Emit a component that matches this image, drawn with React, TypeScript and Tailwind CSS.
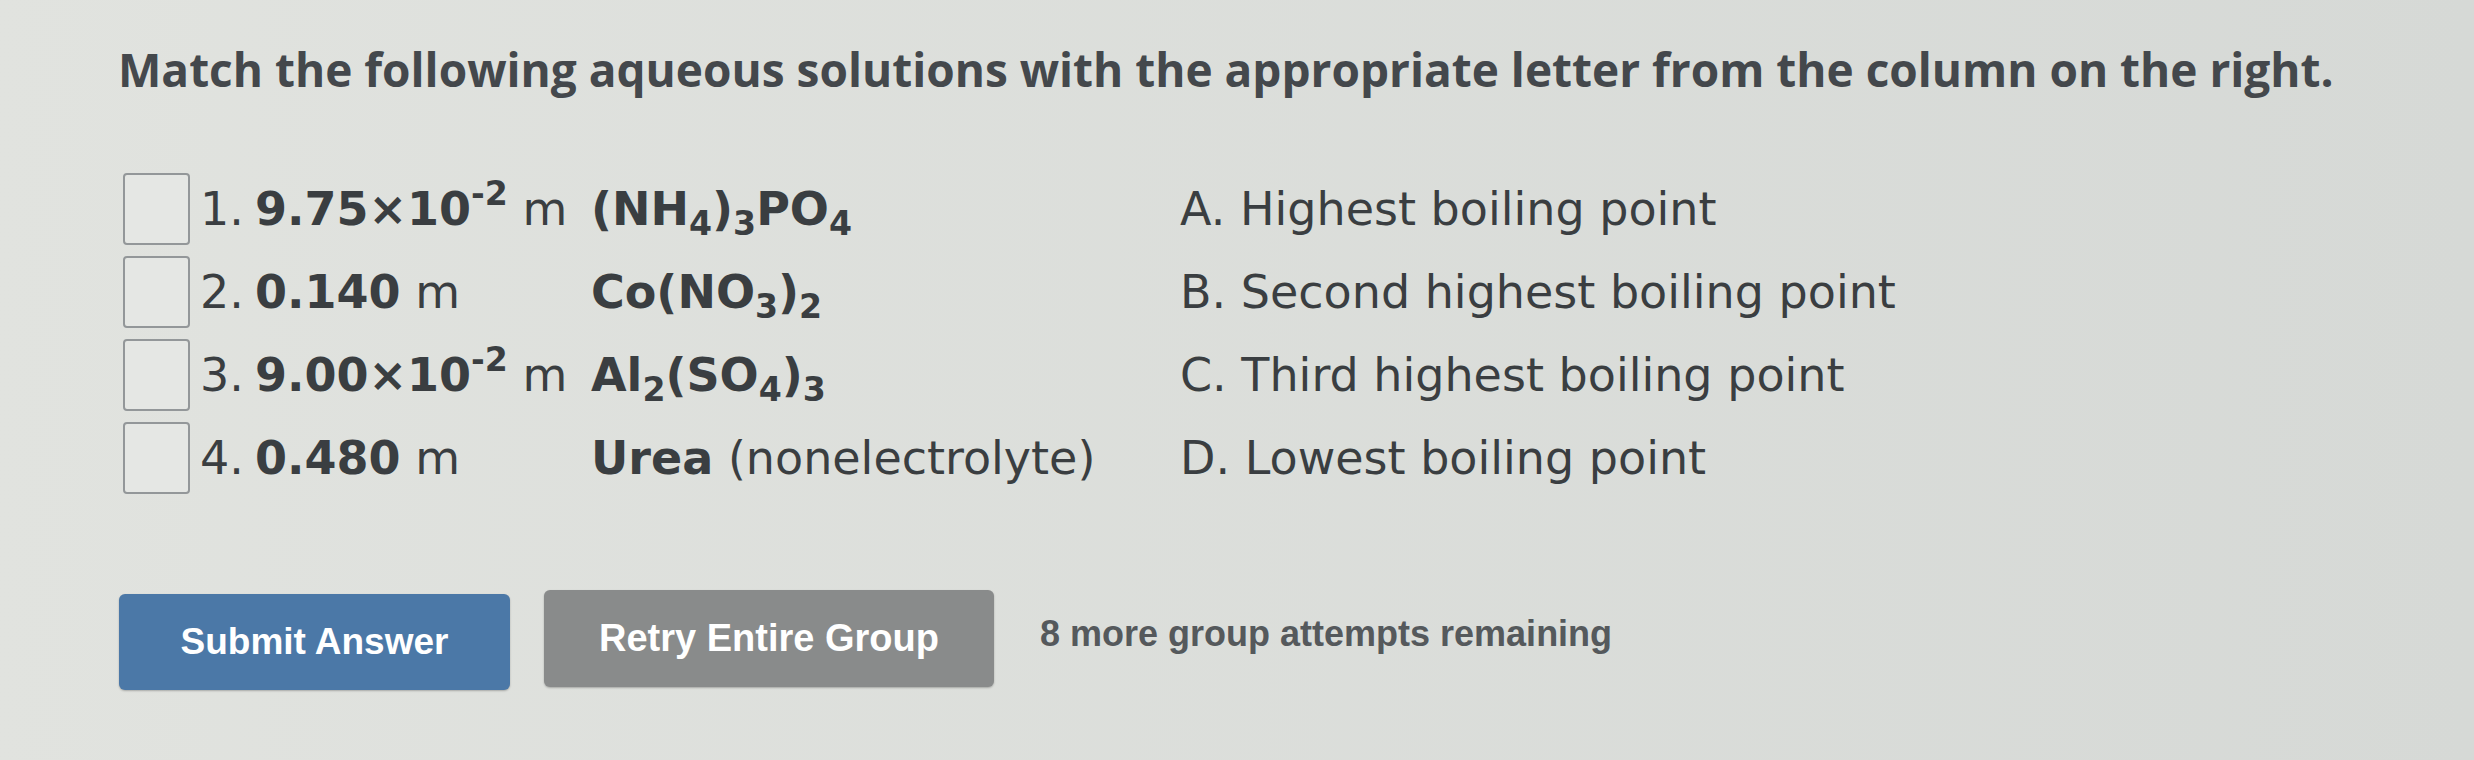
import React from "react";

const rows = [
  {
    n: "1.",
    value: (
      <>
        <b>9.75×10</b>
        <sup className="font-bold text-[0.72em] top-[-0.6em]">-2</sup> m
      </>
    ),
    compound: (
      <b>
        (NH<sub className="text-[0.72em] bottom-[-0.3em]">4</sub>)
        <sub className="text-[0.72em] bottom-[-0.3em]">3</sub>PO
        <sub className="text-[0.72em] bottom-[-0.3em]">4</sub>
      </b>
    ),
  },
  {
    n: "2.",
    value: (
      <>
        <b>0.140</b> m
      </>
    ),
    compound: (
      <b>
        Co(NO<sub className="text-[0.72em] bottom-[-0.3em]">3</sub>)
        <sub className="text-[0.72em] bottom-[-0.3em]">2</sub>
      </b>
    ),
  },
  {
    n: "3.",
    value: (
      <>
        <b>9.00×10</b>
        <sup className="font-bold text-[0.72em] top-[-0.6em]">-2</sup> m
      </>
    ),
    compound: (
      <b>
        Al<sub className="text-[0.72em] bottom-[-0.3em]">2</sub>(SO
        <sub className="text-[0.72em] bottom-[-0.3em]">4</sub>)
        <sub className="text-[0.72em] bottom-[-0.3em]">3</sub>
      </b>
    ),
  },
  {
    n: "4.",
    value: (
      <>
        <b>0.480</b> m
      </>
    ),
    compound: (
      <>
        <b>Urea</b> (nonelectrolyte)
      </>
    ),
  },
];

const answers = [
  "A. Highest boiling point",
  "B. Second highest boiling point",
  "C. Third highest boiling point",
  "D. Lowest boiling point",
];

export default function App() {
  return (
    <div className="w-[2474px] h-[760px] overflow-hidden bg-linear-to-r from-[#e1e3df] to-[#d6d9d6] text-[#3a3e41] pl-[118px] pt-[38px]">
      <h1 className="font-['Open_Sans',sans-serif] font-bold text-[46px] leading-[62px] text-[#44484c] whitespace-nowrap">
        Match the following aqueous solutions with the appropriate letter from the column on the right.
      </h1>

      <div className="flex mt-[73px] ml-[5px] font-['DejaVu_Sans',Verdana,sans-serif] text-[46px]">
        <div className="flex flex-col gap-[11px] w-[1057px]">
          {rows.map((r) => (
            <div key={r.n} className="flex items-center h-[72px]">
              <div className="w-[67px] h-[72px] border-2 border-[#939799] rounded-[4px] bg-[#e5e7e4] shrink-0" />
              <div className="flex items-center leading-none ml-[10px]">
                <span className="w-[55px]">{r.n}</span>
                <span className="w-[336px] whitespace-nowrap">{r.value}</span>
                <span className="whitespace-nowrap">{r.compound}</span>
              </div>
            </div>
          ))}
        </div>
        <div className="flex flex-col gap-[11px]">
          {answers.map((a) => (
            <div key={a} className="flex items-center h-[72px] leading-none whitespace-nowrap">
              {a}
            </div>
          ))}
        </div>
      </div>

      <div className="flex items-center mt-[92px] ml-[1px] font-['Liberation_Sans',Arial,sans-serif] font-bold">
        <button className="w-[391px] h-[96px] mt-[8px] rounded-[6px] bg-[#4b78a7] text-white text-[37px] shadow-[0_1px_2px_rgba(0,0,0,0.25)]">
          Submit Answer
        </button>
        <button className="ml-[34px] w-[450px] h-[97px] rounded-[6px] bg-[#898b8b] text-white text-[38px] shadow-[0_1px_2px_rgba(0,0,0,0.25)]">
          Retry Entire Group
        </button>
        <span className="ml-[46px] mb-[8px] text-[36px] text-[#55595c]">8 more group attempts remaining</span>
      </div>
    </div>
  );
}
